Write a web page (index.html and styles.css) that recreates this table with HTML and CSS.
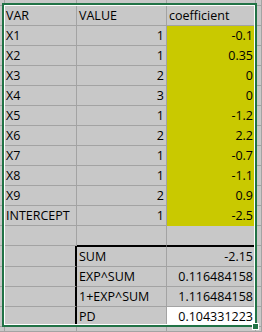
FILE: index.html
```html
<!DOCTYPE html>
<html>

	<head>
		<meta charset="utf-8">
		<title>PD</title>
		<link rel="stylesheet" href="styles.css">
	</head>

	<body>
		<div id="sheet">
			<!--上一行（只露出一点）-->
			<div class="row edge-top">
				<div class="c"></div><div class="c"></div><div class="c"></div><div class="c"></div><div class="c"></div>
			</div>
			<div class="row">
				<div class="c"></div><div class="c colA">VAR</div><div class="c">VALUE</div><div class="c">coefficient</div><div class="c"></div>
			</div>
			<div class="row">
				<div class="c"></div><div class="c colA">X1</div><div class="c num">1</div><div class="c num yel">-0.1</div><div class="c"></div>
			</div>
			<div class="row">
				<div class="c"></div><div class="c colA">X2</div><div class="c num">1</div><div class="c num yel">0.35</div><div class="c"></div>
			</div>
			<div class="row">
				<div class="c"></div><div class="c colA">X3</div><div class="c num">2</div><div class="c num yel">0</div><div class="c"></div>
			</div>
			<div class="row">
				<div class="c"></div><div class="c colA">X4</div><div class="c num">3</div><div class="c num yel">0</div><div class="c"></div>
			</div>
			<div class="row">
				<div class="c"></div><div class="c colA">X5</div><div class="c num">1</div><div class="c num yel">-1.2</div><div class="c"></div>
			</div>
			<div class="row">
				<div class="c"></div><div class="c colA">X6</div><div class="c num">2</div><div class="c num yel">2.2</div><div class="c"></div>
			</div>
			<div class="row">
				<div class="c"></div><div class="c colA">X7</div><div class="c num">1</div><div class="c num yel">-0.7</div><div class="c"></div>
			</div>
			<div class="row">
				<div class="c"></div><div class="c colA">X8</div><div class="c num">1</div><div class="c num yel">-1.1</div><div class="c"></div>
			</div>
			<div class="row">
				<div class="c"></div><div class="c colA">X9</div><div class="c num">2</div><div class="c num yel">0.9</div><div class="c"></div>
			</div>
			<div class="row">
				<div class="c"></div><div class="c colA">INTERCEPT</div><div class="c num">1</div><div class="c num yel">-2.5</div><div class="c"></div>
			</div>
			<div class="row">
				<div class="c"></div><div class="c colA"></div><div class="c box-above"></div><div class="c box-above"></div><div class="c"></div>
			</div>
			<!--结果区，外面一圈黑框-->
			<div class="row box-first">
				<div class="c"></div><div class="c colA box-left"></div><div class="c box-top">SUM</div><div class="c num box-top">-2.15</div><div class="c"></div>
			</div>
			<div class="row">
				<div class="c"></div><div class="c colA box-left"></div><div class="c">EXP^SUM</div><div class="c num">0.116484158</div><div class="c"></div>
			</div>
			<div class="row">
				<div class="c"></div><div class="c colA box-left"></div><div class="c">1+EXP^SUM</div><div class="c num">1.116484158</div><div class="c"></div>
			</div>
			<div class="row">
				<div class="c"></div><div class="c colA box-left"></div><div class="c">PD</div><div class="c num white">0.104331223</div><div class="c"></div>
			</div>
			<div class="row edge-bottom">
				<div class="c"></div><div class="c"></div><div class="c"></div><div class="c"></div><div class="c"></div>
			</div>

			<!--选中区域的绿框和右下角的小方块-->
			<div class="selection"></div>
			<div class="handle"></div>
		</div>
	</body>

</html>
```

FILE: styles.css
```css
body {
	margin: 0;
	width: 262px;
	height: 332px;
	overflow: hidden;
	background: #c8c8c8;
	font-family: "Open Sans", "Liberation Sans", sans-serif;
	font-size: 12.5px;
	color: #000;
}
#sheet {
	position: relative;
	display: flex;
	flex-direction: column;
	height: 332px;
}
.row {
	display: grid;
	grid-template-columns: 2px 75px 90px 89px 1fr;
	height: 20px;
	flex: none;
}
.edge-top {
	height: 6px;
}
.edge-bottom {
	flex: 1;
	height: auto;
}
.box-first {
	height: 21px;
}
.c {
	box-sizing: border-box;
	border-right: 1px solid #a3a3a3;
	border-bottom: 1px solid #a3a3a3;
	padding: 2px 2px 0;
	line-height: 16px;
	white-space: nowrap;
	overflow: hidden;
}
.colA {
	padding-left: 4px;
}
.num {
	text-align: right;
}
.yel {
	background: #c9c900;
	border-bottom-color: #c9c900;
}
.white {
	background: #fff;
}
/*黑框*/
.box-above {
	border-bottom-color: #000;
}
.box-top {
	border-top: 1px solid #000;
}
.box-left {
	border-right: 2px solid #000;
}
.selection {
	position: absolute;
	left: 2px;
	top: 3px;
	width: 255px;
	height: 324px;
	box-sizing: border-box;
	border: 2px solid #217346;
	box-shadow: inset 0 0 0 1px #fff;
}
.handle {
	position: absolute;
	left: 253px;
	top: 324px;
	width: 5px;
	height: 5px;
	background: #217346;
	box-shadow: 0 0 0 1px #fff;
}
```
